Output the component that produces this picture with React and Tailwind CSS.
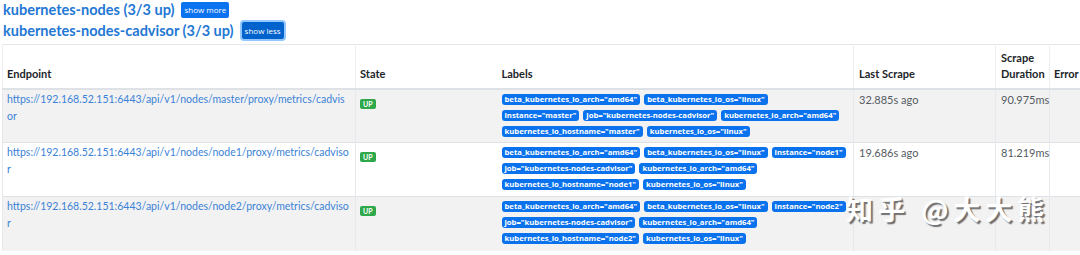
import React from 'react';

const rows = [
    {
        endpoint: 'https://192.168.52.151:6443/api/v1/nodes/master/proxy/metrics/cadvisor',
        labels: [
            'beta_kubernetes_io_arch="amd64"',
            'beta_kubernetes_io_os="linux"',
            'instance="master"',
            'job="kubernetes-nodes-cadvisor"',
            'kubernetes_io_arch="amd64"',
            'kubernetes_io_hostname="master"',
            'kubernetes_io_os="linux"',
        ],
        last: '32.885s ago',
        duration: '90.975ms',
    },
    {
        endpoint: 'https://192.168.52.151:6443/api/v1/nodes/node1/proxy/metrics/cadvisor',
        labels: [
            'beta_kubernetes_io_arch="amd64"',
            'beta_kubernetes_io_os="linux"',
            'instance="node1"',
            'job="kubernetes-nodes-cadvisor"',
            'kubernetes_io_arch="amd64"',
            'kubernetes_io_hostname="node1"',
            'kubernetes_io_os="linux"',
        ],
        last: '19.686s ago',
        duration: '81.219ms',
    },
    {
        endpoint: 'https://192.168.52.151:6443/api/v1/nodes/node2/proxy/metrics/cadvisor',
        labels: [
            'beta_kubernetes_io_arch="amd64"',
            'beta_kubernetes_io_os="linux"',
            'instance="node2"',
            'job="kubernetes-nodes-cadvisor"',
            'kubernetes_io_arch="amd64"',
            'kubernetes_io_hostname="node2"',
            'kubernetes_io_os="linux"',
        ],
        last: '',
        duration: '',
    },
]

export default function App() {
    return (
        <div className="relative w-[1080px] h-[255px] overflow-hidden bg-white text-[#212529]" style={{ fontFamily: 'Lato, "Open Sans", sans-serif' }}>
            {/* pool headers */}
            <div className="flex items-center gap-[7px] pl-[3px] h-[19px]">
                <h2 className="text-[14.5px] leading-[19px] font-bold text-[#1f78d4]">kubernetes-nodes (3/3 up)</h2>
                <button className="h-[16px] px-[3px] rounded-[2px] bg-[#0b73f0] text-white text-[8px] leading-[16px]" style={{ fontFamily: '"Open Sans", sans-serif' }}>show more</button>
            </div>
            <div className="flex items-center gap-[8px] pl-[3px] h-[21px] mt-[1px]">
                <h2 className="text-[14.5px] leading-[19px] font-bold text-[#1f78d4]">kubernetes-nodes-cadvisor (3/3 up)</h2>
                <button className="h-[17px] px-[3px] rounded-[2px] bg-[#0062cc] text-white text-[8px] leading-[17px] shadow-[0_0_0_2px_rgba(38,143,255,0.5)]" style={{ fontFamily: '"Open Sans", sans-serif' }}>show less</button>
            </div>

            {/* targets table */}
            <div className="mt-[3px] pl-[2px]">
                <table className="table-fixed border-collapse w-[1090px] text-[11px]">
                    <colgroup>
                        <col className="w-[353px]" />
                        <col className="w-[140px]" />
                        <col className="w-[358px]" />
                        <col className="w-[142px]" />
                        <col className="w-[54px]" />
                        <col className="w-[43px]" />
                    </colgroup>
                    <thead>
                        <tr className="h-[44px] border-t border-[#e3e6ea] border-b-2 border-b-[#dee2e6] text-left align-bottom">
                            <th className="pl-[4px] pb-[6px] font-bold leading-[16px] border-l border-[#eceef0]">Endpoint</th>
                            <th className="pl-[4px] pb-[6px] font-bold leading-[16px] border-l border-[#eceef0]">State</th>
                            <th className="pl-[6px] pb-[6px] font-bold leading-[16px]">Labels</th>
                            <th className="pl-[5px] pb-[6px] font-bold leading-[16px] border-l border-[#eceef0]">Last Scrape</th>
                            <th className="pl-[5px] pb-[6px] font-bold leading-[16px] border-l border-[#eceef0]">Scrape<br />Duration</th>
                            <th className="pl-[4px] pb-[6px] font-bold leading-[16px] border-l border-[#eceef0]">Error</th>
                        </tr>
                    </thead>
                    <tbody>
                        {rows.map((row, index) => (
                            <tr key={index} className={`h-[54px] align-top border-t border-[#dee2e6] ${index % 2 === 0 ? 'bg-[#f2f2f3]' : 'bg-white'}`}>
                                <td className="pl-[4px] pr-[6px] pt-[1px] text-[10.5px] leading-[17px] break-all text-[#3b82d6] border-l border-[#e6e8eb]">{row.endpoint}</td>
                                <td className="pl-[4px] pt-[5px] border-l border-[#e6e8eb]">
                                    <span className="inline-block h-[10px] px-[3px] rounded-[2px] bg-[#2ea84a] text-white text-[7px] font-bold leading-[10px]">UP</span>
                                </td>
                                <td className="pl-[6px] pr-[4px] pt-[4px] pb-[4px]">
                                    <div className="flex flex-wrap gap-x-[4px] gap-y-[5px]" style={{ fontFamily: '"Open Sans", sans-serif' }}>
                                        {row.labels.map((label) => (
                                            <span key={label} className="h-[11px] px-[3px] rounded-[3px] bg-[#0b72ee] text-white text-[7.7px] font-bold leading-[11px] whitespace-nowrap">{label}</span>
                                        ))}
                                    </div>
                                </td>
                                <td className="pl-[5px] pt-[1px] leading-[17px] text-[#555b62] border-l border-[#e6e8eb]">{row.last}</td>
                                <td className="pl-[5px] pt-[1px] leading-[17px] text-[#555b62] border-l border-[#e6e8eb]">{row.duration}</td>
                                <td className="pl-[4px] border-l border-[#e6e8eb]"></td>
                            </tr>
                        ))}
                    </tbody>
                </table>
            </div>

            {/* watermark */}
            <div className="absolute left-[846px] top-[193px] text-[27px] leading-[31px] tracking-[5px] font-bold text-white [text-shadow:2px_2px_1px_rgba(70,70,70,0.75)]" style={{ fontFamily: '"Noto Sans CJK SC", sans-serif' }}>
                知乎 @大大熊
            </div>
        </div>
    )
}
